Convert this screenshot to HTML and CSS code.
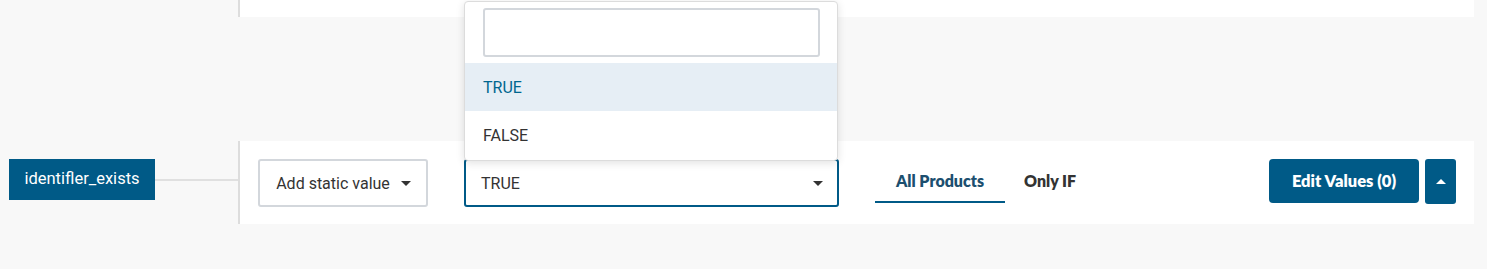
FILE: index.html
```html
<!DOCTYPE html>
<html>
<head>
<meta charset="utf-8">
<link rel="stylesheet" href="styles.css">
</head>
<body>
<div class="top-card"></div>
<div class="row">
  <div class="label-col">
    <div class="field-label">identifler_exists</div>
    <div class="connector"></div>
  </div>
  <div class="card">
    <button class="static-btn">Add static value <span class="caret"></span></button>
    <div class="select-wrap">
      <div class="select">
        <span>TRUE</span>
        <span class="caret"></span>
      </div>
      <div class="dropdown">
        <div class="search-box"><div class="search-input"></div></div>
        <div class="option active">TRUE</div>
        <div class="option">FALSE</div>
      </div>
    </div>
    <div class="tabs">
      <div class="tab selected">All Products</div>
      <div class="tab">Only IF</div>
    </div>
    <div class="spacer"></div>
    <button class="edit-btn">Edit Values (0)</button>
    <button class="arrow-btn"><span class="up"></span></button>
  </div>
</div>
</body>
</html>
```
FILE: styles.css
```css
* { box-sizing: border-box; }
body {
  margin: 0;
  background: #f8f8f8;
  font-family: Roboto, "Liberation Sans", sans-serif;
  color: #333;
  width: 1487px;
  height: 269px;
  overflow: hidden;
}
.top-card {
  margin-left: 238px;
  width: 1236px;
  height: 17px;
  background: #fff;
  border-left: 2px solid #ddd;
}
.row {
  display: flex;
  margin-top: 124px;
  height: 83px;
}
.label-col {
  display: flex;
  align-items: flex-start;
  padding-left: 9px;
  width: 238px;
}
.field-label {
  margin-top: 18px;
  width: 146px;
  height: 41px;
  background: #005a87;
  color: #fff;
  font-size: 16.5px;
  display: flex;
  align-items: center;
  justify-content: center;
  padding-bottom: 2px;
}
.connector {
  margin-top: 38px;
  flex: 1;
  height: 2px;
  background: #e0e0e0;
}
.card {
  width: 1236px;
  height: 83px;
  background: #fff;
  border-left: 2px solid #ddd;
  display: flex;
  align-items: flex-start;
  padding: 18px 18px 0 18px;
}
.caret {
  display: inline-block;
  width: 0;
  height: 0;
  border-left: 5px solid transparent;
  border-right: 5px solid transparent;
  border-top: 5px solid #333;
}
.static-btn {
  width: 170px;
  height: 48px;
  background: #fff;
  border: 2px solid #d3d7dc;
  border-radius: 3px;
  font-family: Roboto, "Liberation Sans", sans-serif;
  font-size: 16px;
  color: #333;
  display: flex;
  align-items: center;
  justify-content: center;
  gap: 11px;
  padding: 0 0 0 1px;
}
.static-btn .caret { margin-top: 1px; }
.select-wrap {
  position: relative;
  margin-left: 36px;
  width: 375px;
}
.select {
  height: 48px;
  border: 2px solid #005a87;
  border-radius: 3px;
  display: flex;
  align-items: center;
  justify-content: space-between;
  padding: 0 14px 0 15px;
  font-size: 16px;
  color: #333;
}
.dropdown {
  position: absolute;
  left: 0;
  bottom: calc(100% - 2px);
  width: 374px;
  height: 160px;
  background: #fff;
  border: 1px solid #dcdcdc;
  border-radius: 4px;
  box-shadow: 0 2px 8px rgba(0,0,0,0.12);
  display: flex;
  flex-direction: column;
}
.search-box {
  padding: 6px 17px 6px 18px;
}
.search-input {
  height: 49px;
  border: 2px solid #d3d7dc;
  border-radius: 3px;
}
.option {
  height: 48px;
  flex-shrink: 0;
  padding-left: 18px;
  display: flex;
  align-items: center;
  font-size: 16px;
  color: #333;
}
.option.active {
  background: #e6eef5;
  color: #00668f;
}
.tabs {
  display: flex;
  margin-left: 36px;
  height: 44px;
}
.tab {
  font-family: Lato, "Open Sans", sans-serif;
  font-weight: 800;
  font-size: 16px;
  color: #333;
  height: 44px;
  display: flex;
  align-items: center;
  justify-content: center;
  padding-top: 1px;
}
.tab.selected {
  width: 130px;
  color: #1c4f6f;
  border-bottom: 2px solid #005a87;
}
.tab:not(.selected) {
  padding-left: 19px;
  padding-right: 19px;
  padding-bottom: 2px;
}
.spacer { flex: 1; }
.edit-btn {
  width: 150px;
  height: 44px;
  background: #005a87;
  color: #fff;
  border: none;
  border-radius: 4px;
  font-family: Lato, "Open Sans", sans-serif;
  font-weight: 800;
  font-size: 16.5px;
  padding: 0;
}
.arrow-btn {
  margin-left: 6px;
  width: 31px;
  height: 45px;
  background: #005a87;
  border: none;
  border-radius: 3px;
  display: flex;
  align-items: center;
  justify-content: center;
  padding: 0;
}
.up {
  width: 0;
  height: 0;
  border-left: 5px solid transparent;
  border-right: 5px solid transparent;
  border-bottom: 5px solid #fff;
}
```
